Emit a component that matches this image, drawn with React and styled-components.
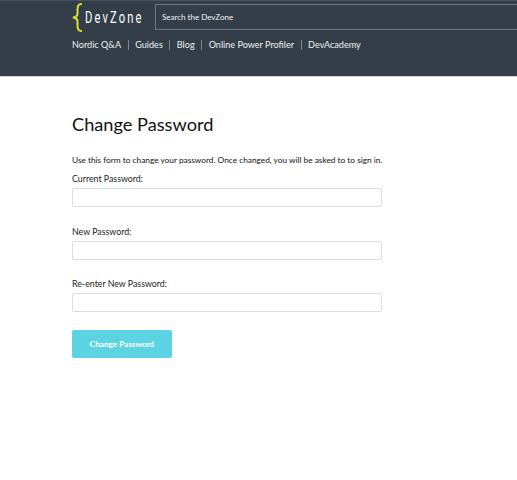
import { Fragment } from "react";
import styled, { createGlobalStyle } from "styled-components";

const GlobalStyle = createGlobalStyle`
  html, body {
    margin: 0;
    padding: 0;
    background: #fff;
    font-family: "Lato", "Open Sans", sans-serif;
  }
`;

const Page = styled.div`
  width: 517px;
  height: 480px;
  overflow: hidden;
`;

const Header = styled.header`
  height: 77px;
  box-sizing: border-box;
  padding: 3px 0 0 72px;
  background: #333e48;
  border-top: 1px solid #46525c;
  border-bottom: 1px solid #cfd3d6;
`;

const TopRow = styled.div`
  display: flex;
  align-items: flex-start;
`;

const Logo = styled.div`
  display: flex;
  align-items: center;
  width: 83px;
  height: 26px;
  color: #fff;
`;

const LogoText = styled.span`
  margin-left: 2px;
  font-family: "Roboto", sans-serif;
  font-size: 16px;
  font-weight: 400;
  letter-spacing: 3px;
  white-space: nowrap;
  transform: scaleX(0.7);
  transform-origin: left center;
`;

const SearchBox = styled.div`
  flex: 1;
  height: 26px;
  box-sizing: border-box;
  padding-left: 6px;
  border: 1px solid #6d7880;
  border-right: 0;
  color: #f2f4f5;
  font-size: 8px;
  line-height: 24px;
`;

const Nav = styled.nav`
  display: flex;
  align-items: center;
  margin-top: 8px;
  color: #eef1f2;
  font-size: 9.1px;
  line-height: 14px;
`;

const NavDivider = styled.span`
  width: 1px;
  height: 10px;
  margin: 0 6.5px;
  background: #7b868e;
`;

const Main = styled.main`
  padding: 35px 0 0 72px;
  width: 310px;
  color: #111;
`;

const Title = styled.h1`
  margin: 0 0 17px;
  font-size: 18.2px;
  line-height: 25px;
  font-weight: 400;
`;

const Intro = styled.p`
  margin: 0 0 6px;
  font-size: 8.3px;
  line-height: 12px;
  white-space: nowrap;
`;

const Field = styled.div`
  margin-bottom: 17.5px;
`;

const Label = styled.label`
  display: block;
  margin-bottom: 2px;
  color: #222;
  font-size: 8.8px;
  line-height: 14px;
`;

const Input = styled.input`
  display: block;
  width: 100%;
  height: 19px;
  box-sizing: border-box;
  border: 1px solid #d5dde1;
  border-radius: 2px;
  background: #fff;
`;

const Submit = styled.button`
  display: block;
  width: 100px;
  height: 28px;
  margin-top: 18px;
  padding: 0;
  border: 0;
  border-radius: 2px;
  background: #5bd3e3;
  color: #fff;
  font-family: inherit;
  font-size: 8.2px;
  font-weight: 700;
`;

const navItems = ["Nordic Q&A", "Guides", "Blog", "Online Power Profiler", "DevAcademy"];
const fields = ["Current Password:", "New Password:", "Re-enter New Password:"];

export default function App() {
  return (
    <Page>
      <GlobalStyle />
      <Header>
        <TopRow>
          <Logo>
            <svg width="11" height="29" viewBox="0 0 11 29" style={{ flexShrink: 0 }}>
              <path
                d="M10 1C6 1 5.500 3 5.500 7V11C5.500 13 4 14 1 14.500C4 15 5.500 16 5.500 18V22C5.500 26 6 28 10 28"
                fill="none"
                stroke="#d7e22c"
                strokeWidth="2"
              />
            </svg>
            <LogoText>DevZone</LogoText>
          </Logo>
          <SearchBox>Search the DevZone</SearchBox>
        </TopRow>
        <Nav>
          {navItems.map((item, index) => (
            <Fragment key={item}>
              {index > 0 && <NavDivider />}
              <span>{item}</span>
            </Fragment>
          ))}
        </Nav>
      </Header>
      <Main>
        <Title>Change Password</Title>
        <Intro>Use this form to change your password. Once changed, you will be asked to to sign in.</Intro>
        {fields.map((label) => (
          <Field key={label}>
            <Label>{label}</Label>
            <Input type="password" />
          </Field>
        ))}
        <Submit type="button">Change Password</Submit>
      </Main>
    </Page>
  );
}
